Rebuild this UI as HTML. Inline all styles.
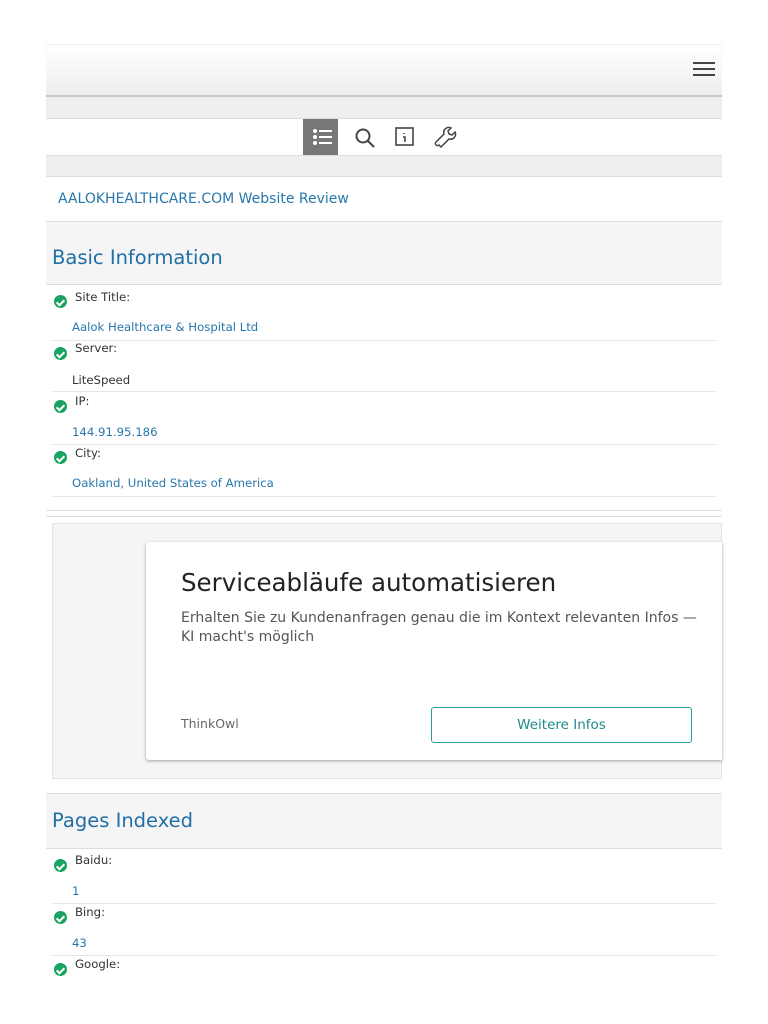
<!DOCTYPE html>
<html><head><meta charset="utf-8"><style>
*{margin:0;padding:0;box-sizing:border-box}
body{width:768px;height:1024px;background:#fff;position:relative;overflow:hidden;font-family:"DejaVu Sans","Liberation Sans",sans-serif}
.a{position:absolute}
.blue{color:#2777ad}
.lbl{font-size:11.7px;color:#333}
.val{font-size:11.7px}
.chk{width:13px;height:13px;border-radius:50%;background:#1aa260}
.chk:after{content:"";position:absolute;left:3.5px;top:2.5px;width:3px;height:6px;border:solid #fff;border-width:0 2px 2px 0;transform:rotate(45deg)}
.hr{height:1px;background:#e6e6e6}
</style></head><body>
<div class="a" style="left:46px;top:44px;width:676px;height:53px;background:linear-gradient(#fff,#eeeeee);border-top:1px solid #eee;border-bottom:2px solid #c8c8c8"></div>
<div class="a" style="left:693px;top:62px;width:22px;height:2px;background:#444"></div>
<div class="a" style="left:693px;top:68px;width:22px;height:2px;background:#444"></div>
<div class="a" style="left:693px;top:74px;width:22px;height:2px;background:#444"></div>
<div class="a" style="left:46px;top:97px;width:676px;height:22px;background:#efefef;border-bottom:1px solid #ddd"></div>
<div class="a" style="left:303px;top:119px;width:35px;height:36px;background:#777"></div>
<svg class="a" style="left:303px;top:119px" width="160" height="36" fill="none" stroke-width="2">
<g fill="#fff"><circle cx="12" cy="12" r="2"/><circle cx="12" cy="18" r="2"/><circle cx="12" cy="24" r="2"/></g>
<g stroke="#fff"><path d="M16 12h13M16 18h13M16 24h13"/></g>
<g stroke="#444"><circle cx="60" cy="17" r="6.5"/><path d="M65 22l6 6"/>
<rect x="93" y="9" width="17" height="17" stroke-width="1.6"/><path d="M101 14v1M100 18h2v5" stroke-width="1.6"/>
<path d="M138 28l8-8a5 5 0 0 0 6-7l-3 3-3-1-1-3 3-3a5 5 0 0 0-7 6l-8 8a2 2 0 0 0 3 3z" stroke-width="1.5"/></g>
</svg>
<div class="a" style="left:46px;top:155px;width:676px;height:22px;background:#efefef;border-top:1px solid #ddd;border-bottom:1px solid #ddd"></div>
<div class="a blue" style="left:58px;top:191px;font-size:14px">AALOKHEALTHCARE.COM Website Review</div>
<div class="a" style="left:46px;top:221px;width:676px;height:64px;background:#f5f5f5;border-top:1px solid #ddd;border-bottom:1px solid #ddd"></div>
<div class="a" style="left:52px;top:246px;font-size:19.5px;color:#1f6fa5">Basic Information</div>

<div class="a chk" style="left:54px;top:295px"></div><div class="a lbl" style="left:75px;top:290px">Site Title:</div><div class="a val blue" style="left:72px;top:320px">Aalok Healthcare &amp; Hospital Ltd</div><div class="a hr" style="left:52px;top:340px;width:664px"></div>
<div class="a chk" style="left:54px;top:347px"></div><div class="a lbl" style="left:75px;top:341px">Server:</div><div class="a val" style="left:72px;top:373px;color:#333">LiteSpeed</div><div class="a hr" style="left:52px;top:391px;width:664px"></div>
<div class="a chk" style="left:54px;top:400px"></div><div class="a lbl" style="left:75px;top:394px">IP:</div><div class="a val blue" style="left:72px;top:425px">144.91.95.186</div><div class="a hr" style="left:52px;top:444px;width:664px"></div>
<div class="a chk" style="left:54px;top:451px"></div><div class="a lbl" style="left:75px;top:446px">City:</div><div class="a val blue" style="left:72px;top:476px">Oakland, United States of America</div><div class="a hr" style="left:52px;top:496px;width:664px"></div>
<div class="a" style="left:46px;top:510px;width:676px;height:7px;border-top:1px solid #ddd;border-bottom:1px solid #ddd"></div>

<div class="a" style="left:52px;top:523px;width:670px;height:256px;background:#f5f5f5;border:1px solid #e4e4e4"></div>
<div class="a" style="left:146px;top:542px;width:576px;height:218px;background:#fff;border-radius:3px 0 0 3px;box-shadow:0 1px 3px rgba(0,0,0,.35)"></div>
<div class="a" style="left:181px;top:568px;font-size:24.5px;color:#222">Serviceabläufe automatisieren</div>
<div class="a" style="left:181px;top:609px;width:522px;font-size:14px;line-height:19px;color:#555">Erhalten Sie zu Kundenanfragen genau die im Kontext relevanten Infos — KI macht's möglich</div>
<div class="a" style="left:181px;top:716px;font-size:12.5px;color:#666">ThinkOwl</div>
<div class="a" style="left:431px;top:707px;width:261px;height:36px;border:1px solid #2a9d9a;border-radius:3px;color:#1e8a8a;font-size:13.5px;text-align:center;line-height:34px">Weitere Infos</div>

<div class="a" style="left:46px;top:793px;width:676px;height:56px;background:#f5f5f5;border-top:1px solid #ddd;border-bottom:1px solid #ddd"></div>
<div class="a" style="left:52px;top:809px;font-size:19.5px;color:#1f6fa5">Pages Indexed</div>
<div class="a chk" style="left:54px;top:859px"></div><div class="a lbl" style="left:75px;top:853px">Baidu:</div><div class="a val blue" style="left:72px;top:884px">1</div><div class="a hr" style="left:52px;top:903px;width:664px"></div>
<div class="a chk" style="left:54px;top:911px"></div><div class="a lbl" style="left:75px;top:905px">Bing:</div><div class="a val blue" style="left:72px;top:936px">43</div><div class="a hr" style="left:52px;top:955px;width:664px"></div>
<div class="a chk" style="left:54px;top:963px"></div><div class="a lbl" style="left:75px;top:957px">Google:</div>
</body></html>
